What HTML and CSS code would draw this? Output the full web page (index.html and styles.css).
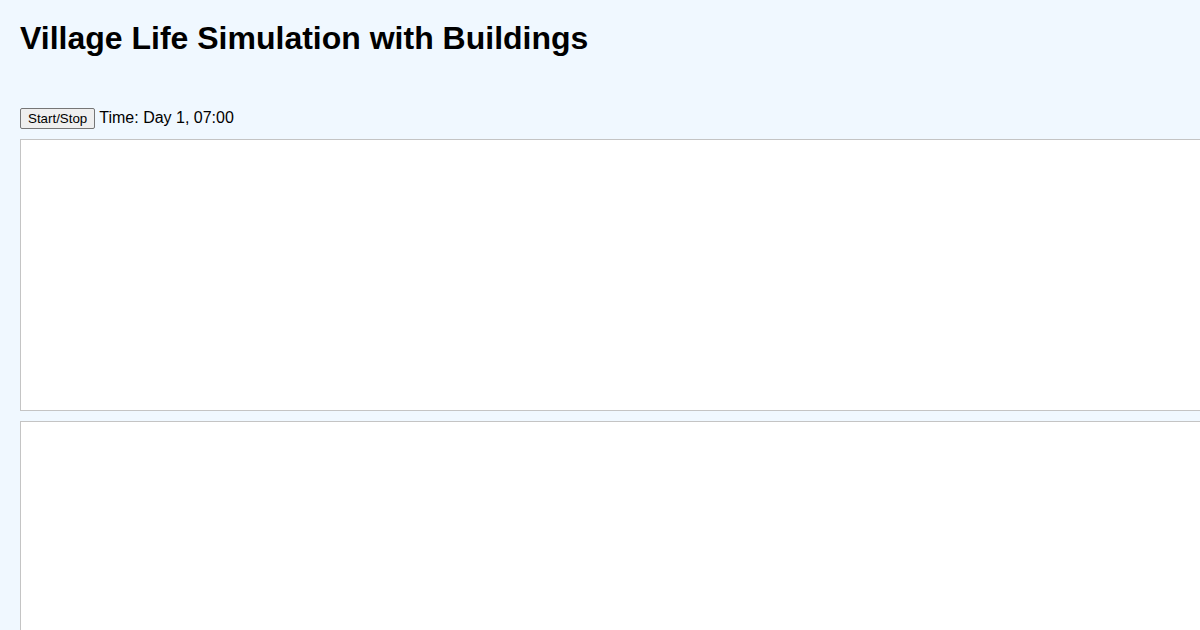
FILE: index.html
```html
<!DOCTYPE html>
<html>
<head>
<meta charset="utf-8">
<title>Village Life Simulation with Buildings</title>
<link rel="stylesheet" href="styles.css">
</head>
<body>
<h1 class="title">Village Life Simulation with Buildings</h1>
<div class="controls"><button class="toggle">Start/Stop</button> <span class="time">Time: Day 1, 07:00</span></div>
<div class="board"></div>
<div class="board"></div>
</body>
</html>
```
FILE: styles.css
```css
html, body {
  margin: 0;
}
body {
  padding: 20px;
  background: #f0f8ff;
  font-family: "Liberation Sans", Arial, sans-serif;
  font-size: 16px;
  width: 1300px;
}
.title {
  margin: 0;
  font-size: 32px;
  font-weight: bold;
  line-height: 37px;
}
.controls {
  margin-top: 50px;
  display: flex;
  align-items: center;
  gap: 4px;
  height: 22px;
}
.toggle {
  font-family: "Liberation Sans", Arial, sans-serif;
  font-size: 13.33px;
  padding: 1px 7px;
  height: 21px;
  border: 1px solid #767676;
  border-radius: 2px;
  background: #efefef;
  color: #000;
}
.time {
  font-size: 16px;
}
.board {
  margin-top: 10px;
  width: 1240px;
  height: 270px;
  border: 1px solid #c4c4c4;
  background: #fff;
}
```
